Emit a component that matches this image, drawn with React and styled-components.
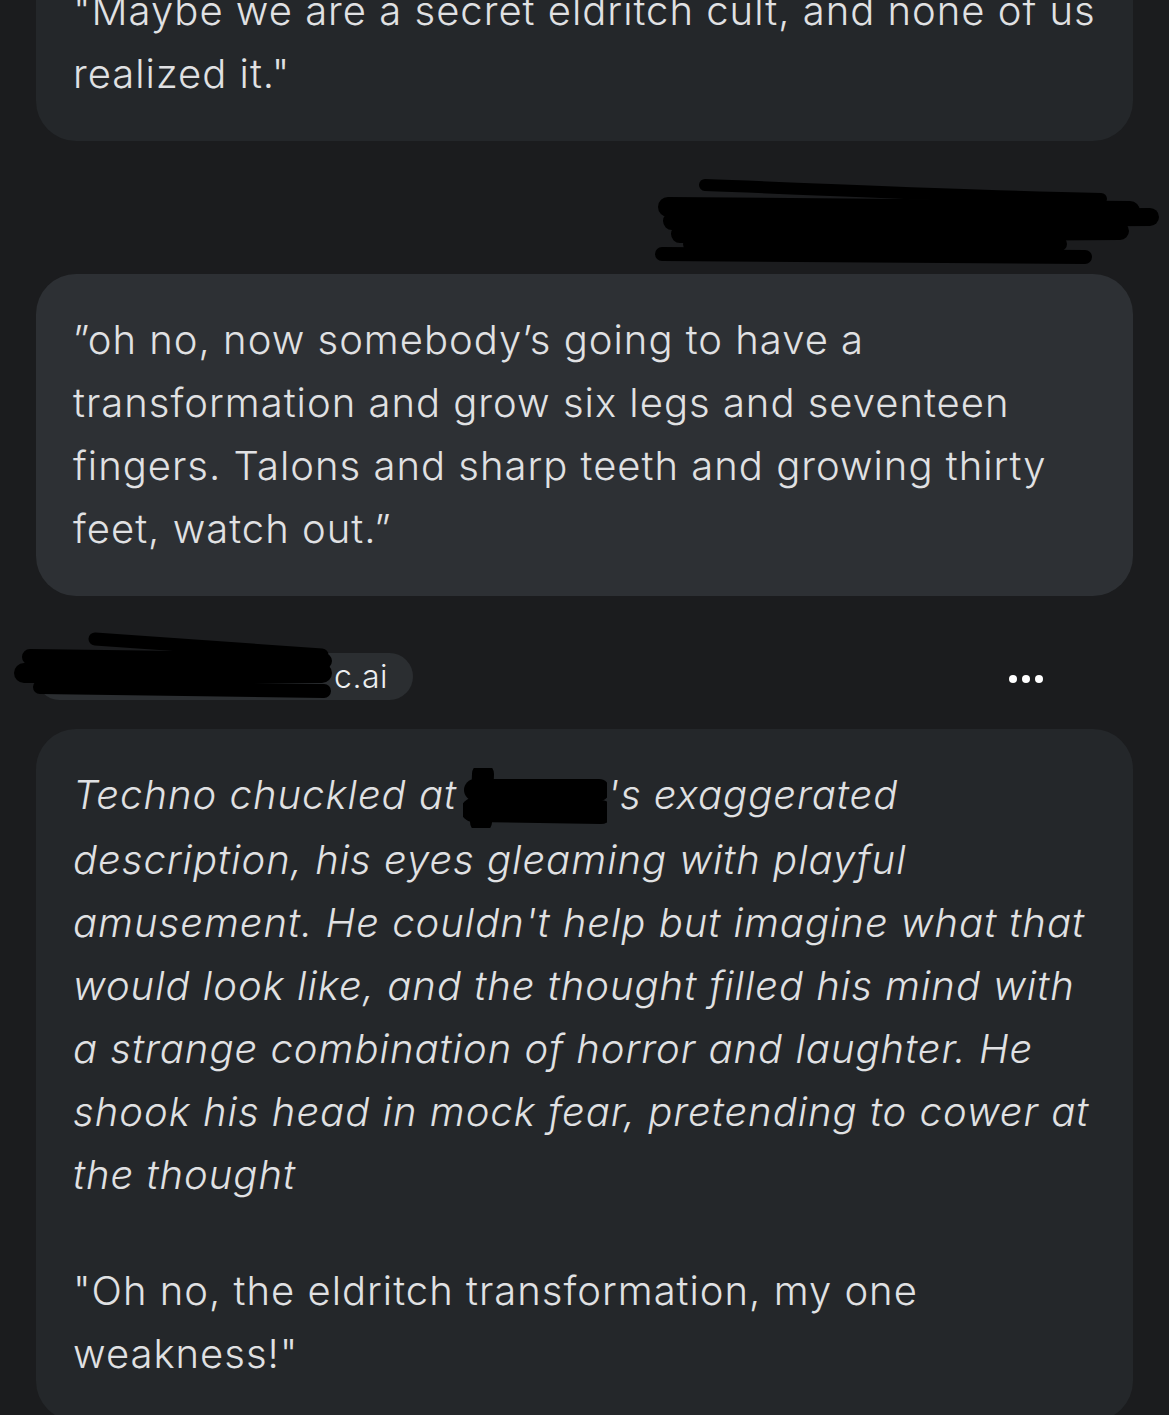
import React from 'react';
import styled, { createGlobalStyle } from 'styled-components';

const GlobalStyle = createGlobalStyle`
  html, body {
    margin: 0;
    padding: 0;
    background: #1b1c1e;
    overflow: hidden;
  }
  * { box-sizing: border-box; }
`;

const Feed = styled.div`
  display: flex;
  flex-direction: column;
  width: 1169px;
  height: 1415px;
  overflow: hidden;
  font-family: Inter, Roboto, "Liberation Sans", sans-serif;
`;

const Bubble = styled.div`
  margin: ${p => (p.$clipped ? '-55px 36px 0' : '0 36px')};
  padding: 34px 37px 36px;
  border-radius: 40px;
  background: ${p => (p.$user ? '#2d3034' : '#24272a')};
  flex-shrink: 0;
`;

const Para = styled.p`
  margin: 0;
  font-size: 40px;
  font-weight: 300;
  letter-spacing: 1px;
  line-height: 63px;
  color: #e0e1e3;
  font-style: ${p => (p.$italic ? 'italic' : 'normal')};
  white-space: nowrap;

  & + & {
    margin-top: 53px;
  }
`;

const Header = styled.div`
  height: 133px;
  padding: 27px ${p => (p.$user ? '9px' : '126px')} 0 36px;
  display: flex;
  align-items: center;
  justify-content: ${p => (p.$user ? 'flex-end' : 'space-between')};
  flex-shrink: 0;
`;

const Pill = styled.div`
  display: flex;
  align-items: center;
  gap: 6px;
  height: 47px;
  padding: 0 25px 0 14px;
  border-radius: 24px;
  background: #2b2e31;
  font-size: 32px;
  font-weight: 300;
  letter-spacing: 0.5px;
  color: #eceef0;
`;

const NameSlot = styled.span`
  position: relative;
  width: 278px;
  height: 47px;
`;

const NameCover = styled.svg`
  position: absolute;
  left: -40px;
  top: -24px;
`;

const InlineCover = styled.svg`
  display: inline-block;
  vertical-align: middle;
  margin: 0 0 0 -6px;
`;

const MoreButton = styled.button`
  border: none;
  background: none;
  padding: 0;
  margin-top: 6px;
  display: flex;
  cursor: pointer;
`;

// marker-pen redactions, one stroke per line
function Scribble({ as: Comp = 'svg', width, height, strokes, ...rest }) {
  const Svg = Comp;
  return (
    <Svg width={width} height={height} viewBox={`0 0 ${width} ${height}`} {...rest}>
      {strokes.map(([d, w], i) => (
        <path key={i} d={d} stroke="#000" strokeWidth={w} strokeLinecap="round" strokeLinejoin="round" fill="none" />
      ))}
    </Svg>
  );
}

const userStrokes = [
  ['M50 11 C190 16 300 22 446 25', 12],
  ['M13 33 L475 37', 20],
  ['M17 47 L495 43', 18],
  ['M25 60 L465 57', 18],
  ['M35 70 L405 70', 14],
  ['M7 80 L430 83', 14],
];

const nameStrokes = [
  ['M85 10 L312 26', 13],
  ['M20 28 L314 32', 16],
  ['M14 44 L312 44', 20],
  ['M30 58 L314 62', 14],
];

const inlineStrokes = [
  ['M12 22 L136 22', 22],
  ['M10 42 L138 44', 24],
  ['M20 6 L18 54', 22],
];

export default function App() {
  return (
    <>
      <GlobalStyle />
      <Feed>
        <Bubble $clipped>
          <Para>"Maybe we are a secret eldritch cult, and none of us<br />realized it."</Para>
        </Bubble>

        <Header $user>
          <Scribble width={505} height={95} strokes={userStrokes} />
        </Header>

        <Bubble $user>
          <Para>
            ”oh no, now somebody’s going to have a<br />
            transformation and grow six legs and seventeen<br />
            fingers. Talons and sharp teeth and growing thirty<br />
            feet, watch out.”
          </Para>
        </Bubble>

        <Header>
          <Pill>
            <NameSlot>
              <Scribble as={NameCover} width={330} height={74} strokes={nameStrokes} />
            </NameSlot>
            c.ai
          </Pill>
          <MoreButton aria-label="More">
            <svg width="34" height="10" viewBox="0 0 34 10">
              <circle cx="4" cy="5" r="4" fill="#fff" />
              <circle cx="17" cy="5" r="4" fill="#fff" />
              <circle cx="30" cy="5" r="4" fill="#fff" />
            </svg>
          </MoreButton>
        </Header>

        <Bubble>
          <Para $italic>
            Techno chuckled at <Scribble as={InlineCover} width={144} height={60} strokes={inlineStrokes} />'s exaggerated<br />
            description, his eyes gleaming with playful<br />
            amusement. He couldn't help but imagine what that<br />
            would look like, and the thought filled his mind with<br />
            a strange combination of horror and laughter. He<br />
            shook his head in mock fear, pretending to cower at<br />
            the thought
          </Para>
          <Para>"Oh no, the eldritch transformation, my one<br />weakness!"</Para>
        </Bubble>
      </Feed>
    </>
  );
}
